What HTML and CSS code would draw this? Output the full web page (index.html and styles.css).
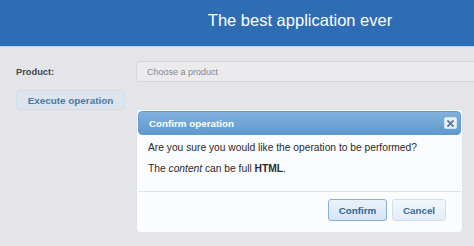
FILE: index.html
```html
<!DOCTYPE html>
<html lang="en">
<head>
<meta charset="utf-8">
<title>The best application ever</title>
<link rel="stylesheet" href="styles.css">
</head>
<body>
<header class="header">
  <h1 class="title">The best application ever</h1>
</header>
<main class="main">
  <div class="row">
    <label class="label" for="product">Product:</label>
    <input class="select" id="product" type="text" placeholder="Choose a product">
  </div>
  <div class="row">
    <button class="exec-btn" type="button">Execute operation</button>
  </div>
</main>
<div class="dialog" role="dialog">
  <div class="titlebar">
    <span class="dialog-title">Confirm operation</span>
    <span class="close" aria-label="close">
      <svg width="7" height="7" viewBox="0 0 7 7"><path d="M1 1 L6 6 M6 1 L1 6" stroke="#5b7ea6" stroke-width="1.8" stroke-linecap="round"/></svg>
    </span>
  </div>
  <div class="dialog-body">
    <p class="line">Are you sure you would like the operation to be performed?</p>
    <p class="line">The <em>content</em> can be full <strong>HTML</strong>.</p>
  </div>
  <div class="buttonpane">
    <button class="dlg-btn primary" type="button">Confirm</button>
    <button class="dlg-btn secondary" type="button">Cancel</button>
  </div>
</div>
</body>
</html>
```
FILE: styles.css
```css
html, body {
  margin: 0;
  padding: 0;
}
body {
  width: 474px;
  height: 246px;
  overflow: hidden;
  background: #e5e5e9;
  font-family: "Liberation Sans", Arial, sans-serif;
  position: relative;
}
.header {
  height: 46px;
  background: #2e6db4;
  border-bottom: 1px solid #b8cde6;
  padding-left: 126px;
  text-align: center;
}
.title {
  margin: 0;
  font-size: 16.5px;
  line-height: 40px;
  font-weight: normal;
  color: #ffffff;
}
.main {
  padding: 14px 0 0 16px;
  display: flex;
  flex-direction: column;
  gap: 8px;
}
.row {
  display: flex;
  align-items: center;
}
.label {
  width: 120px;
  font-size: 9.3px;
  font-weight: bold;
  color: #454545;
}
.select {
  flex: 1;
  margin-right: -20px;
  height: 21px;
  box-sizing: border-box;
  border: 1px solid #d4d4d9;
  border-radius: 3px;
  background: #ebebee;
  padding: 0 10px;
  font-family: "Liberation Sans", Arial, sans-serif;
  font-size: 9px;
  color: #555;
  outline: none;
}
.select::placeholder {
  color: #86868a;
}
.exec-btn {
  width: 109px;
  height: 20px;
  box-sizing: border-box;
  border: 1px solid #d3dde7;
  border-radius: 3px;
  background: #dce4ed;
  color: #4d78a1;
  font-family: "Liberation Sans", Arial, sans-serif;
  font-size: 9.9px;
  font-weight: bold;
  padding: 0;
}
.dialog {
  position: absolute;
  left: 136px;
  top: 109px;
  width: 327px;
  height: 124px;
  box-sizing: border-box;
  border: 1px solid #dce3eb;
  border-radius: 4px;
  background: #fbfcfe;
  padding: 1px;
  display: flex;
  flex-direction: column;
}
.titlebar {
  height: 24px;
  box-sizing: border-box;
  border: 1px solid #6299cd;
  border-radius: 4px;
  background: linear-gradient(#80b1dc, #6199cf);
  display: flex;
  align-items: center;
  justify-content: space-between;
  padding: 0 3px 0 10px;
}
.dialog-title {
  color: #ffffff;
  font-size: 9.8px;
  font-weight: bold;
}
.close {
  width: 13px;
  height: 12px;
  box-sizing: border-box;
  border-radius: 2px;
  background: #e9eff6;
  border: 1px solid #d2deea;
  display: flex;
  align-items: center;
  justify-content: center;
}
.dialog-body {
  padding: 2px 10px 12px 10px;
  border-bottom: 1px solid #dde3ea;
}
.line {
  margin: 0;
  font-size: 10.25px;
  line-height: 21px;
  color: #2a2a2a;
}
.buttonpane {
  display: flex;
  justify-content: flex-end;
  gap: 5px;
  padding: 7px 15px 0 0;
}
.dlg-btn {
  height: 22px;
  box-sizing: border-box;
  border-radius: 3px;
  font-family: "Liberation Sans", Arial, sans-serif;
  font-size: 9.8px;
  font-weight: bold;
  padding: 0;
}
.primary {
  width: 59px;
  border: 1px solid #86afd8;
  background: linear-gradient(#eaf2fa, #d5e5f5);
  color: #2f6496;
}
.secondary {
  width: 54px;
  border: 1px solid #cfdfee;
  background: linear-gradient(#f2f7fc, #e3edf7);
  color: #3a6a97;
}
```
